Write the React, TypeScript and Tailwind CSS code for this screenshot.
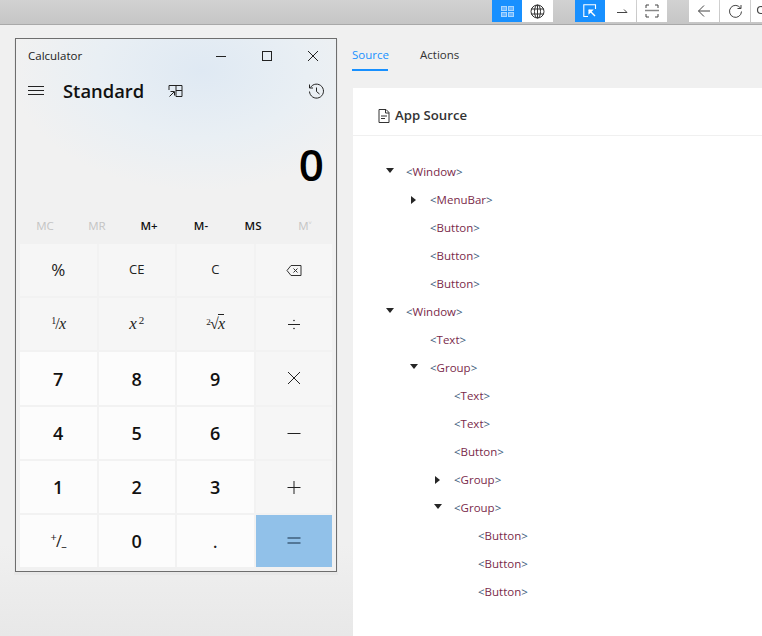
import React from "react";

const font = { fontFamily: '"Open Sans","Noto Sans",sans-serif' };

function TopBtn({ active, children, className = "" }: { active?: boolean; children: React.ReactNode; className?: string }) {
  return (
    <div className={`h-[22px] flex items-center justify-center ${active ? "bg-[#1890ff]" : "bg-white"} ${className}`}>
      {children}
    </div>
  );
}

function TopBar() {
  return (
    <div className="h-[25px] bg-gradient-to-b from-[#d2d2d2] to-[#c6c6c6] border-b border-[#a9a9a9] flex items-start overflow-hidden">
      <div className="ml-[492px] flex">
        <TopBtn active className="w-[30px]">
          <svg width="13" height="13" viewBox="0 0 13 13" fill="#69b5ff" stroke="#a8d6ff" strokeWidth="1">
            <rect x="0.5" y="1.5" width="5" height="4" />
            <rect x="7.5" y="1.5" width="5" height="4" />
            <rect x="0.5" y="7.5" width="5" height="4" />
            <rect x="7.5" y="7.5" width="5" height="4" />
          </svg>
        </TopBtn>
        <TopBtn className="w-[31px]">
          <svg width="15" height="15" viewBox="0 0 15 15" fill="none" stroke="#333" strokeWidth="1">
            <circle cx="7.5" cy="7.5" r="6.5" />
            <ellipse cx="7.5" cy="7.5" rx="3" ry="6.5" />
            <path d="M7.5 1v13M1 5h13M1 10h13" />
          </svg>
        </TopBtn>
      </div>
      <div className="ml-[22px] flex">
        <TopBtn active className="w-[30px]">
          <svg width="14" height="14" viewBox="0 0 14 14" fill="none" stroke="white" strokeWidth="1.1">
            <path d="M5 12.5H0.8V0.8H12.5V5" />
            <path d="M6 6L12 12" strokeWidth="1.4" />
            <path d="M6 6h3.5L6 9.5z" fill="white" />
          </svg>
        </TopBtn>
        <TopBtn className="w-[31px]">
          <svg width="14" height="8" viewBox="0 0 14 8" fill="none" stroke="#444" strokeWidth="1">
            <path d="M3 5.5H13L10 2.5" />
          </svg>
        </TopBtn>
        <TopBtn className="w-[30px] ml-px">
          <svg width="14" height="14" viewBox="0 0 14 14" fill="none" stroke="#444" strokeWidth="1">
            <path d="M1 4V1H4M10 1H13V4M1 10V13H4M10 13H13V10" />
            <path d="M0 6.5H14" stroke="#888" strokeWidth="1.5" />
          </svg>
        </TopBtn>
      </div>
      <div className="ml-[22px] flex gap-px">
        <TopBtn className="w-[30px]">
          <svg width="14" height="14" viewBox="0 0 14 14" fill="none" stroke="#444" strokeWidth="1">
            <path d="M13 7H1.5M7 1.5L1.5 7L7 12.5" />
          </svg>
        </TopBtn>
        <TopBtn className="w-[30px]">
          <svg width="15" height="15" viewBox="0 0 15 15" fill="none" stroke="#444" strokeWidth="1">
            <path d="M12.6 4.2A6 6 0 1 0 13.5 7.5" />
            <path d="M9.5 4.5H13V1" />
          </svg>
        </TopBtn>
        <div className="w-[11px] h-[22px] bg-white overflow-hidden">
          <svg width="15" height="15" viewBox="0 0 15 15" fill="none" stroke="#444" strokeWidth="1.2" className="ml-[3px] mt-[3px]">
            <circle cx="7" cy="7" r="3.5" />
          </svg>
        </div>
      </div>
    </div>
  );
}

function Key({ children, tone = "light", className = "" }: { children: React.ReactNode; tone?: "light" | "white" | "eq"; className?: string }) {
  const bg = tone === "white" ? "bg-[#fcfcfc]" : tone === "eq" ? "bg-[#91c1e9]" : "bg-[#f6f6f6]";
  return <div className={`flex items-center justify-center text-black ${bg} ${className}`}>{children}</div>;
}

function Digit({ v }: { v: string }) {
  return (
    <Key tone="white">
      <span className="text-[18px] leading-none font-semibold text-[#111] mt-[1px]">{v}</span>
    </Key>
  );
}

function OpIcon({ d }: { d: string }) {
  return (
    <svg width="16" height="16" viewBox="0 0 16 16" fill="none" stroke="#222" strokeWidth="1">
      <path d={d} />
    </svg>
  );
}

function Calculator() {
  const mem = [
    ["MC", false],
    ["MR", false],
    ["M+", true],
    ["M-", true],
    ["MS", true],
    ["M˅", false],
  ] as const;
  const math = { fontFamily: '"Liberation Serif",serif' };
  return (
    <div className="w-[322px] h-[534px] ml-[15px] mt-[13px] border border-[#6e6e6e] shadow-[0_2px_0_1px_#e8e8e8] bg-[radial-gradient(ellipse_190px_120px_at_58%_6%,#dfe9f3_0%,#e9eff4_55%,#f1f1f1_100%)] flex flex-col">
      <div className="h-[34px] flex items-center pl-[12px] shrink-0">
        <span className="text-[11.5px] text-[#222] flex-1">Calculator</span>
        <div className="flex items-center">
          <div className="w-[46px] flex justify-center">
            <svg width="12" height="12" viewBox="0 0 12 12" stroke="#222" strokeWidth="1"><path d="M1 6.5H11" /></svg>
          </div>
          <div className="w-[46px] flex justify-center">
            <svg width="12" height="12" viewBox="0 0 12 12" stroke="#222" strokeWidth="1" fill="none"><rect x="1.5" y="1.5" width="9" height="9" /></svg>
          </div>
          <div className="w-[46px] flex justify-center">
            <svg width="12" height="12" viewBox="0 0 12 12" stroke="#222" strokeWidth="1" fill="none"><path d="M1 1L11 11M11 1L1 11" /></svg>
          </div>
        </div>
      </div>
      <div className="h-[36px] flex items-center pl-[12px] pr-[11px] shrink-0">
        <svg width="16" height="12" viewBox="0 0 16 12" stroke="#222" strokeWidth="1"><path d="M0 1.5H16M0 5.5H16M0 9.5H16" /></svg>
        <span className="ml-[19px] text-[18.4px] leading-none font-semibold text-[#111]">Standard</span>
        <svg className="ml-[24px]" width="15" height="14" viewBox="0 0 15 14" stroke="#222" strokeWidth="1" fill="none">
          <path d="M1 1.5H14V12.5H8M8 1.5V12.5M8 6.5H14M1 1.5V6" />
          <path d="M1.5 12.5L6 8M2.5 7.5H6.5V11.5" />
        </svg>
        <div className="flex-1" />
        <svg width="17" height="17" viewBox="0 0 17 17" fill="none" stroke="#222" strokeWidth="1">
          <path d="M2.5 4.5A7 7 0 1 1 1.5 8.5" />
          <path d="M1.5 1.5V5H5" />
          <path d="M8.5 4.5V8.5L11.5 11" />
        </svg>
      </div>
      <div className="h-[99px] flex items-center justify-end pr-[12px] shrink-0">
        <span className="text-[44px] leading-none font-semibold text-black mt-[11px]">0</span>
      </div>
      <div className="h-[36px] grid grid-cols-[repeat(6,52px)] pl-[3px] shrink-0 items-center">
        {mem.map(([t, on]) => (
          <span key={t} className={`text-center text-[11.5px] ${on ? "text-[#111] font-semibold" : "text-[#c4c4c4]"}`}>{t}</span>
        ))}
      </div>
      <div className="grid grid-cols-4 grid-rows-6 gap-[2px] mx-[4px] h-[323px] bg-[#f2f2f2]">
        <Key><span className="text-[17px] text-[#222]">%</span></Key>
        <Key><span className="text-[13px] text-[#222]">CE</span></Key>
        <Key><span className="text-[13px] text-[#222]">C</span></Key>
        <Key>
          <svg width="16" height="13" viewBox="0 0 16 13" fill="none" stroke="#333" strokeWidth="1">
            <path d="M5 1.5H15V11.5H5L1 6.5Z" />
            <path d="M7.5 4.5L11.5 8.5M11.5 4.5L7.5 8.5" />
          </svg>
        </Key>
        <Key><span className="text-[16px] text-[#222] tracking-tighter" style={math}><sup className="text-[10px]">1</sup>/<i>x</i></span></Key>
        <Key><span className="text-[17px] text-[#222]" style={math}><i>x</i><sup className="text-[11px] ml-[2px]">2</sup></span></Key>
        <Key><span className="text-[16px] text-[#222] tracking-tighter" style={math}><sup className="text-[9px]">2</sup>√<i className="border-t border-[#222] leading-none">x</i></span></Key>
        <Key>
          <svg width="16" height="16" viewBox="0 0 16 16" fill="none" stroke="#222" strokeWidth="1">
            <path d="M2 8.5H14" />
            <circle cx="8" cy="4.5" r="0.4" />
            <circle cx="8" cy="12.5" r="0.4" />
          </svg>
        </Key>
        <Digit v="7" />
        <Digit v="8" />
        <Digit v="9" />
        <Key><OpIcon d="M2 2L14 14M14 2L2 14" /></Key>
        <Digit v="4" />
        <Digit v="5" />
        <Digit v="6" />
        <Key><OpIcon d="M1.5 8.5H14.5" /></Key>
        <Digit v="1" />
        <Digit v="2" />
        <Digit v="3" />
        <Key><OpIcon d="M1.5 8.5H14.5M8 2V15" /></Key>
        <Key tone="white"><span className="text-[16px] text-[#222] tracking-tighter"><sup className="text-[11px]">+</sup>/<sub className="text-[11px]">–</sub></span></Key>
        <Digit v="0" />
        <Key tone="white"><span className="text-[16px] text-[#222] font-semibold mt-[3px]">.</span></Key>
        <Key tone="eq">
          <svg width="16" height="10" viewBox="0 0 16 10" fill="none" stroke="#3f5f7c" strokeWidth="1.4">
            <path d="M1.5 2H14.5M1.5 7H14.5" />
          </svg>
        </Key>
      </div>
    </div>
  );
}

function Node({ name, depth, arrow }: { name: string; depth: number; arrow?: "down" | "right" }) {
  return (
    <div className="h-[28px] flex items-center text-[11.5px]" style={{ paddingLeft: depth * 24 }}>
      <div className="w-[21px] flex justify-start">
        {arrow === "down" && (
          <svg width="8" height="5" viewBox="0 0 8 5" className="ml-[1px] mt-[-4px]"><path d="M0 0H8L4 5Z" fill="#262626" /></svg>
        )}
        {arrow === "right" && (
          <svg width="5" height="8" viewBox="0 0 5 8" className="ml-[2px] mt-[-1px]"><path d="M0 0V8L5 4Z" fill="#262626" /></svg>
        )}
      </div>
      <span className="-mt-[1px]">
        <span className="text-[#3a5a7a]">&lt;</span>
        <span className="text-[#7a2a4a]">{name}</span>
        <span className="text-[#3a5a7a]">&gt;</span>
      </span>
    </div>
  );
}

function RightPanel() {
  const nodes: [string, number, ("down" | "right")?][] = [
    ["Window", 0, "down"],
    ["MenuBar", 1, "right"],
    ["Button", 1],
    ["Button", 1],
    ["Button", 1],
    ["Window", 0, "down"],
    ["Text", 1],
    ["Group", 1, "down"],
    ["Text", 2],
    ["Text", 2],
    ["Button", 2],
    ["Group", 2, "right"],
    ["Group", 2, "down"],
    ["Button", 3],
    ["Button", 3],
    ["Button", 3],
  ];
  return (
    <div className="flex-1 flex flex-col min-w-0">
      <div className="h-[63px] flex items-start pt-[22px] gap-[32px] text-[11.5px] shrink-0 -ml-px">
        <div className="flex flex-col w-[36px]">
          <span className="text-[#1890ff] h-[22px] leading-[16px]">Source</span>
          <div className="h-[2px] bg-[#1890ff] w-[36px]" />
        </div>
        <span className="text-[#333] leading-[16px]">Actions</span>
      </div>
      <div className="flex-1 bg-white">
        <div className="h-[48px] border-b border-[#f0f0f0] flex items-center pl-[25px] pt-[8px] gap-[5px]">
          <svg width="12" height="14" viewBox="0 0 12 14" fill="none" stroke="#333" strokeWidth="1">
            <path d="M1 0.5H8L11 3.5V13.5H1Z" />
            <path d="M7.5 0.5V4H11M3 7H9M3 9.5H7" />
          </svg>
          <span className="text-[13.2px] font-semibold text-[#333]">App Source</span>
        </div>
        <div className="pt-[22px] pl-[32px]">
          {nodes.map(([n, d, a], i) => (
            <Node key={i} name={n} depth={d} arrow={a} />
          ))}
        </div>
      </div>
    </div>
  );
}

export default function App() {
  return (
    <div className="w-[762px] h-[636px] overflow-hidden flex flex-col bg-[#f0f0f0]" style={font}>
      <TopBar />
      <div className="flex-1 flex min-h-0">
        <div className="w-[353px] shrink-0 bg-gradient-to-b from-[#f0f0f0] from-[85%] to-[#e8e8e8]">
          <Calculator />
        </div>
        <RightPanel />
      </div>
    </div>
  );
}
